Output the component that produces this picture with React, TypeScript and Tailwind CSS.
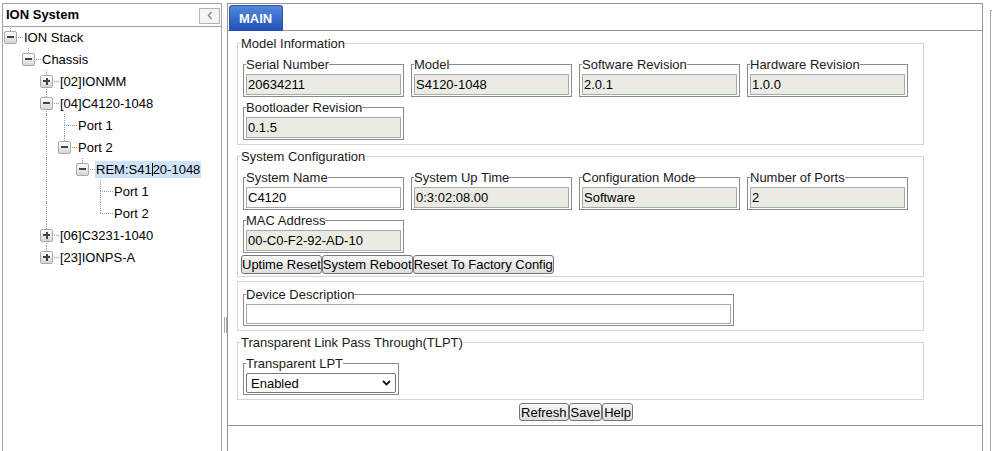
import React from "react";
import clsx from "clsx";

type TreeNode = {
  label: React.ReactNode;
  level: number;
  kind: "minus" | "plus" | "leaf";
  next: boolean;
  through: number[];
  selected?: boolean;
};

const tree: TreeNode[] = [
  { label: "ION Stack", level: 0, kind: "minus", next: false, through: [] },
  { label: "Chassis", level: 1, kind: "minus", next: false, through: [] },
  { label: "[02]IONMM", level: 2, kind: "plus", next: true, through: [] },
  { label: "[04]C4120-1048", level: 2, kind: "minus", next: true, through: [] },
  { label: "Port 1", level: 3, kind: "leaf", next: true, through: [2] },
  { label: "Port 2", level: 3, kind: "minus", next: false, through: [2] },
  {
    label: (
      <>
        REM:S41
        <span className="inline-block h-[13px] w-px bg-black align-[-2px]" />
        20-1048
      </>
    ),
    level: 4,
    kind: "minus",
    next: false,
    through: [2],
    selected: true,
  },
  { label: "Port 1", level: 5, kind: "leaf", next: true, through: [2] },
  { label: "Port 2", level: 5, kind: "leaf", next: false, through: [2] },
  { label: "[06]C3231-1040", level: 2, kind: "plus", next: true, through: [] },
  { label: "[23]IONPS-A", level: 2, kind: "plus", next: false, through: [] },
];

const Expander = ({ kind }: { kind: TreeNode["kind"] }) => {
  if (kind === "leaf") return <span className="h-[13px] w-[13px] shrink-0" />;
  return (
    <span className="relative z-10 h-[13px] w-[13px] shrink-0 rounded-[2px] border border-[#a9a9a9] bg-linear-to-b from-white to-[#d6d6d6]">
      <span className="absolute left-[2px] top-[4.5px] h-[2px] w-[7px] bg-[#444]" />
      {kind === "plus" && <span className="absolute left-[4.5px] top-[2px] h-[7px] w-[2px] bg-[#444]" />}
    </span>
  );
};

// row coordinates are relative to the panel's inner edge (x = 3)
const TreeRow = ({ node }: { node: TreeNode }) => {
  const cx = 7 + 18 * node.level;
  return (
    <div className="relative flex h-[22px] items-center" style={{ paddingLeft: 1 + 18 * node.level }}>
      {node.through.map((lvl) => (
        <span
          key={lvl}
          className="absolute top-0 h-[22px] border-l border-dotted border-[#9a9a9a]"
          style={{ left: 7 + 18 * lvl }}
        />
      ))}
      <span className="absolute top-0 h-[11px] border-l border-dotted border-[#9a9a9a]" style={{ left: cx }} />
      {node.next && (
        <span className="absolute top-[11px] h-[11px] border-l border-dotted border-[#9a9a9a]" style={{ left: cx }} />
      )}
      <span className="absolute top-[11px] w-[13px] border-t border-dotted border-[#9a9a9a]" style={{ left: cx }} />
      <Expander kind={node.kind} />
      <span
        className={clsx(
          "relative z-10 ml-[6px] whitespace-nowrap px-px leading-[17px]",
          node.selected && "bg-[#cfe2fb]",
        )}
      >
        {node.label}
      </span>
    </div>
  );
};

const Field = ({
  label,
  value,
  editable,
  className,
}: {
  label: string;
  value: string;
  editable?: boolean;
  className?: string;
}) => (
  <fieldset className={clsx("w-[161px] border border-[#8a8a8a] px-[2px] pb-[1px] pt-[2px]", className)}>
    <legend className="leading-[15px]">{label}</legend>
    <input
      readOnly
      value={value}
      className={clsx(
        "block h-[21px] w-full border border-[#a3aab1] px-px text-[13px] text-black outline-none",
        editable ? "bg-white" : "bg-[#ebebe4]",
      )}
    />
  </fieldset>
);

const Group = ({
  title,
  children,
  className,
}: {
  title?: string;
  children: React.ReactNode;
  className?: string;
}) => (
  <fieldset className={clsx("w-[687px] border border-[#d6d6d6] px-[3px]", className)}>
    {title && <legend className="leading-[15px]">{title}</legend>}
    {children}
  </fieldset>
);

const Btn = ({ children, className }: { children: React.ReactNode; className?: string }) => (
  <button
    className={clsx(
      "flex items-center rounded-[3px] border border-[#767676] bg-linear-to-b from-[#f7f7f7] to-[#dedede] text-[13px] leading-none text-black",
      className,
    )}
  >
    {children}
  </button>
);

export default function App() {
  return (
    <div className="flex h-[451px] w-[992px] overflow-hidden bg-white font-['Liberation_Sans',Arial,sans-serif] text-[13px] text-[#1a1a1a]">
      {/* left tree panel */}
      <div className="ml-[2px] mt-[3px] flex h-[460px] w-[220px] shrink-0 flex-col border border-[#a3a3a3]">
        <div className="flex h-[23px] shrink-0 items-center justify-between border-b border-[#a3a3a3] pl-[3px]">
          <span className="font-bold text-black">ION System</span>
          <button className="mr-px mt-px flex h-[16px] w-[21px] items-center justify-center border border-[#b4b4b4] bg-[#f5f5f5]">
            <svg width="6" height="9" viewBox="0 0 6 9">
              <polyline points="4.5,1 1.5,4.5 4.5,8" fill="none" stroke="#8c8c8c" strokeWidth="1.5" />
            </svg>
          </button>
        </div>
        <div className="-mt-px flex flex-col text-black">
          {tree.map((n, i) => (
            <TreeRow key={i} node={n} />
          ))}
        </div>
      </div>

      {/* splitter */}
      <div className="flex w-[5px] shrink-0 gap-px pl-[2px] pt-[317px]">
        <span className="h-[16px] w-px bg-[#a8a8a8]" />
        <span className="h-[16px] w-px bg-[#a8a8a8]" />
      </div>

      {/* main panel */}
      <div className="mt-[3px] flex h-[460px] w-[756px] shrink-0 flex-col border border-[#959595]">
        <div className="flex h-[27px] shrink-0 border-b border-[#959595]">
          <div className="relative z-10 ml-px mt-px flex h-[26px] w-[54px] items-center rounded-t-[3px] border border-b-0 border-[#2d57ad] bg-linear-to-b from-[#5687dd] to-[#2050b5] pl-[9px] font-bold text-white">
            MAIN
          </div>
        </div>

        <div className="flex flex-col border-b border-[#959595] pb-[4px] pl-[9px] pt-[5px]">
          <Group title="Model Information" className="pb-[4px] pt-[6px]">
            <div className="flex gap-[7px] pl-[2px]">
              <Field label="Serial Number" value="20634211" />
              <Field label="Model" value="S4120-1048" />
              <Field label="Software Revision" value="2.0.1" />
              <Field label="Hardware Revision" value="1.0.0" />
            </div>
            <div className="mt-[3px] flex pl-[2px]">
              <Field label="Bootloader Revision" value="0.1.5" />
            </div>
          </Group>

          <Group title="System Configuration" className="mt-[4px] pb-[2px] pt-[6px]">
            <div className="flex gap-[7px] pl-[2px]">
              <Field label="System Name" value="C4120" editable />
              <Field label="System Up Time" value="0:3:02:08.00" />
              <Field label="Configuration Mode" value="Software" />
              <Field label="Number of Ports" value="2" />
            </div>
            <div className="mt-[3px] flex pl-[2px]">
              <Field label="MAC Address" value="00-C0-F2-92-AD-10" />
            </div>
            <div className="mt-[2px] flex">
              <Btn className="h-[19px] px-0">Uptime Reset</Btn>
              <Btn className="h-[19px] px-0">System Reboot</Btn>
              <Btn className="h-[19px] px-0">Reset To Factory Config</Btn>
            </div>
          </Group>

          <Group className="mt-[4px] pb-[4px] pt-[5px]">
            <div className="flex pl-[2px]">
              <fieldset className="w-[491px] border border-[#8a8a8a] px-[2px] pb-[1px] pt-[2px]">
                <legend className="leading-[15px]">Device Description</legend>
                <input
                  readOnly
                  value=""
                  className="block h-[20px] w-full border border-[#a3aab1] bg-white px-px text-[13px] outline-none"
                />
              </fieldset>
            </div>
          </Group>

          <Group title="Transparent Link Pass Through(TLPT)" className="mt-[4px] pb-[4px] pt-[6px]">
            <div className="flex pl-[2px]">
              <fieldset className="w-[156px] border border-[#8a8a8a] px-[2px] pb-[1px] pt-[2px]">
                <legend className="leading-[15px]">Transparent LPT</legend>
                <div className="relative">
                  <select
                    defaultValue="Enabled"
                    className="block h-[20px] w-full appearance-none rounded-[2px] border border-[#767676] bg-white pl-[4px] text-[13px] text-black outline-none"
                  >
                    <option>Enabled</option>
                    <option>Disabled</option>
                  </select>
                  <svg
                    className="pointer-events-none absolute right-[5px] top-[7px]"
                    width="9"
                    height="6"
                    viewBox="0 0 9 6"
                  >
                    <polyline points="1,1 4.5,4.5 8,1" fill="none" stroke="#111" strokeWidth="1.8" />
                  </svg>
                </div>
              </fieldset>
            </div>
          </Group>

          <div className="mt-[3px] flex w-[687px] justify-center pr-[9px]">
            <Btn className="h-[18px] px-px">Refresh</Btn>
            <Btn className="h-[18px] px-px">Save</Btn>
            <Btn className="h-[18px] px-px">Help</Btn>
          </div>
        </div>
      </div>

      {/* next panel edge */}
      <div className="ml-[7px] mt-[10px] h-[460px] w-[10px] shrink-0 border-l border-t border-[#a3a3a3]" />
    </div>
  );
}
